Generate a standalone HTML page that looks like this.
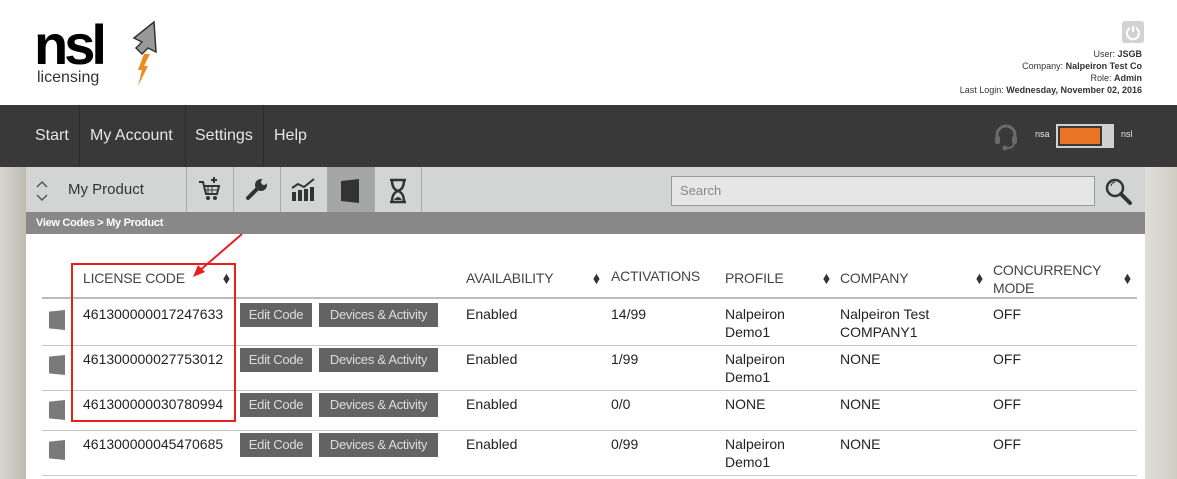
<!DOCTYPE html>
<html><head><meta charset="utf-8"><style>
*{margin:0;padding:0;box-sizing:border-box}
body{width:1177px;height:479px;overflow:hidden;position:relative;background:#fff;font-family:"Liberation Sans",sans-serif}
.a{position:absolute}
.nav{top:105px;left:0;width:1177px;height:62px;background:#393939}
.nav span{position:absolute;top:22px;color:#e6e6e6;font-size:16px}
.sep{position:absolute;top:105px;width:1px;height:62px;background:#2b2b2b}
.side{background:linear-gradient(90deg,#d8d6cc,#bdbcb4)}
.cell{position:absolute;top:167px;height:45px;width:47px;border-left:1px solid #aaa}
.th{position:absolute;font-size:14px;color:#444;letter-spacing:-.2px}
.sort{position:absolute;font-size:9px;color:#333;line-height:5px;transform:scaleX(1.2)}
.td{position:absolute;font-size:14px;color:#222;line-height:18px}
.btn{position:absolute;height:24px;background:#636363;color:#ddd;font-size:13px;line-height:24px;text-align:center;letter-spacing:-.3px}
.ln{position:absolute;left:42px;width:1095px;height:1px;background:#c8c8c8}
.bk{position:absolute;left:49px;width:16px;height:20px;background:#7a7a7a;border-radius:2px 0 0 2px;clip-path:polygon(0 8%,100% 0,100% 100%,0 92%)}
</style></head><body>
<!-- logo -->
<div class="a" style="left:34px;top:17px;font-size:56px;font-weight:bold;letter-spacing:-4px;line-height:56px;color:#000">nsl</div>
<div class="a" style="left:37px;top:69px;font-size:16px;line-height:18px;color:#333">licensing</div>
<svg class="a" style="left:130px;top:20px" width="28" height="68" viewBox="0 0 28 68"><polygon points="24,2 26,32 18,28 12,34 6,28 12,22 4,18" fill="#999" stroke="#333" stroke-width="1.5"/><polygon points="14,34 20,34 14,46 18,46 8,66 12,50 8,50" fill="#f08a1c"/></svg>
<!-- user info -->
<div class="a" style="left:1122px;top:21px;width:22px;height:22px;background:#d2d2d2;border-radius:3px"></div>
<svg class="a" style="left:1124px;top:23px" width="18" height="18"><path d="M6 5a6 6 0 1 0 6 0" fill="none" stroke="#fff" stroke-width="2"/><path d="M9 3v6" stroke="#fff" stroke-width="2"/></svg>
<div class="a" style="right:35px;top:48px;text-align:right;font-size:9px;line-height:12px;color:#333">User: <b>JSGB</b><br>Company: <b>Nalpeiron Test Co</b><br>Role: <b>Admin</b><br>Last Login: <b>Wednesday, November 02, 2016</b></div>
<!-- nav -->
<div class="a nav"><span style="left:35px">Start</span><span style="left:90px">My Account</span><span style="left:195px">Settings</span><span style="left:274px">Help</span>
<svg style="position:absolute;left:993px;top:18px" width="26" height="28"><path d="M4 16v-4a9 9 0 0 1 18 0v4" fill="none" stroke="#6a6a6a" stroke-width="3"/><rect x="2" y="13" width="5" height="8" rx="2" fill="#6a6a6a"/><rect x="19" y="13" width="5" height="8" rx="2" fill="#6a6a6a"/><path d="M21 20q0 5-7 5" fill="none" stroke="#6a6a6a" stroke-width="2"/><circle cx="12" cy="25" r="2.5" fill="#6a6a6a"/></svg>
<span style="left:1035px;top:24px;font-size:9px">nsa</span>
<div style="position:absolute;left:1056px;top:19px;width:48px;height:24px;border:2px solid #d0d0d0;background:#393939;padding:2px"><div style="width:100%;height:100%;background:#ea7425"></div></div>
<div style="position:absolute;left:1104px;top:19px;width:10px;height:24px;background:#d0d0d0"></div>
<span style="left:1121px;top:24px;font-size:9px">nsl</span></div>
<div class="sep" style="left:79px"></div><div class="sep" style="left:185px"></div><div class="sep" style="left:263px"></div>
<!-- sides -->
<div class="a side" style="left:0;top:167px;width:26px;height:312px"></div>
<div class="a side" style="left:1145px;top:167px;width:32px;height:312px;background:linear-gradient(90deg,#e0dfd6,#cfcdc4)"></div>
<!-- toolbar -->
<div class="a" style="left:26px;top:167px;width:1119px;height:45px;background:#d3d5d4"></div>
<svg class="a" style="left:35px;top:180px" width="14" height="22"><path d="M2 7l5-5 5 5M2 15l5 5 5-5" fill="none" stroke="#555" stroke-width="1.5"/></svg>
<div class="a" style="left:68px;top:181px;font-size:15px;color:#333">My Product</div>
<div class="cell" style="left:186px"></div><div class="cell" style="left:233px"></div><div class="cell" style="left:280px"></div><div class="cell" style="left:327px;background:#a5a6a6"></div><div class="cell" style="left:374px"></div><div class="cell" style="left:421px;width:1px"></div>
<svg class="a" style="left:197px;top:176px" width="26" height="26"><path d="M2 6h4l3 12h11l2-8H8" fill="none" stroke="#333" stroke-width="2"/><path d="M11 10v8M15 10v8M8 14h13" stroke="#333"/><circle cx="11" cy="22" r="2" fill="#333"/><circle cx="18" cy="22" r="2" fill="#333"/><path d="M17 1v6M14 4h6" stroke="#333" stroke-width="2"/></svg>
<svg class="a" style="left:245px;top:177px" width="24" height="24"><path d="M3 21l10-10" stroke="#333" stroke-width="4" stroke-linecap="round"/><circle cx="16" cy="8" r="6" fill="#333"/><circle cx="19" cy="5" r="3" fill="#d3d5d4"/></svg>
<svg class="a" style="left:291px;top:178px" width="26" height="24"><rect x="1" y="14" width="4" height="9" fill="#333"/><rect x="7" y="12" width="4" height="11" fill="#333"/><rect x="13" y="11" width="4" height="12" fill="#333"/><rect x="19" y="9" width="4" height="14" fill="#333"/><path d="M1 10l6-4 6 3 10-8" fill="none" stroke="#333" stroke-width="2"/></svg>
<svg class="a" style="left:340px;top:178px" width="20" height="26"><polygon points="1,3 19,1 19,25 1,23" fill="#333"/></svg>
<svg class="a" style="left:388px;top:178px" width="20" height="26"><path d="M2 2h16M2 24h16M4 2q0 9 6 11q6 2 6 11M16 2q0 9-6 11q-6 2-6 11" fill="none" stroke="#333" stroke-width="2.5"/><path d="M6 22q4-6 8 0z" fill="#333"/></svg>
<div class="a" style="left:671px;top:176px;width:424px;height:30px;background:#e6e6e6;border:1px solid #999;font-size:13px;color:#888;padding:6px 8px">Search</div>
<svg class="a" style="left:1104px;top:176px" width="30" height="30"><circle cx="11" cy="12" r="8" fill="none" stroke="#333" stroke-width="2.5"/><path d="M17 18l9 9" stroke="#333" stroke-width="4" stroke-linecap="round"/><path d="M7 10a5 5 0 0 1 4-4" stroke="#333" fill="none"/></svg>
<!-- breadcrumb -->
<div class="a" style="left:26px;top:212px;width:1119px;height:22px;background:#888;color:#fff;font-size:11px;font-weight:bold;padding:5px 10px;letter-spacing:-.3px">View Codes &gt; My Product</div>
<!-- headers -->
<div class="th" style="left:83px;top:270px">LICENSE CODE</div><div class="sort" style="left:222px;top:274px">▲<br>▼</div>
<div class="th" style="left:466px;top:270px">AVAILABILITY</div><div class="sort" style="left:592px;top:274px">▲<br>▼</div>
<div class="th" style="left:611px;top:268px">ACTIVATIONS</div>
<div class="th" style="left:725px;top:270px">PROFILE</div><div class="sort" style="left:822px;top:274px">▲<br>▼</div>
<div class="th" style="left:840px;top:270px">COMPANY</div><div class="sort" style="left:975px;top:274px">▲<br>▼</div>
<div class="th" style="left:993px;top:261px;line-height:18px">CONCURRENCY<br>MODE</div><div class="sort" style="left:1123px;top:274px">▲<br>▼</div>
<div class="ln" style="top:297px;height:2px;background:#bbb"></div>
<div class="ln" style="top:345px"></div><div class="ln" style="top:390px"></div><div class="ln" style="top:430px"></div><div class="ln" style="top:475px"></div>
<!-- rows -->
<div class="bk" style="top:310px"></div><div class="bk" style="top:355px"></div><div class="bk" style="top:400px"></div><div class="bk" style="top:440px"></div>
<div class="td" style="left:83px;top:305px">461300000017247633</div>
<div class="td" style="left:83px;top:350px">461300000027753012</div>
<div class="td" style="left:83px;top:395px">461300000030780994</div>
<div class="td" style="left:83px;top:435px">461300000045470685</div>
<div class="btn" style="left:240px;top:303px;width:72px">Edit Code</div><div class="btn" style="left:319px;top:303px;width:119px">Devices &amp; Activity</div>
<div class="btn" style="left:240px;top:348px;width:72px">Edit Code</div><div class="btn" style="left:319px;top:348px;width:119px">Devices &amp; Activity</div>
<div class="btn" style="left:240px;top:393px;width:72px">Edit Code</div><div class="btn" style="left:319px;top:393px;width:119px">Devices &amp; Activity</div>
<div class="btn" style="left:240px;top:433px;width:72px">Edit Code</div><div class="btn" style="left:319px;top:433px;width:119px">Devices &amp; Activity</div>
<div class="td" style="left:466px;top:305px">Enabled</div><div class="td" style="left:611px;top:305px">14/99</div><div class="td" style="left:725px;top:305px">Nalpeiron<br>Demo1</div><div class="td" style="left:840px;top:305px">Nalpeiron Test<br>COMPANY1</div><div class="td" style="left:993px;top:305px">OFF</div>
<div class="td" style="left:466px;top:350px">Enabled</div><div class="td" style="left:611px;top:350px">1/99</div><div class="td" style="left:725px;top:350px">Nalpeiron<br>Demo1</div><div class="td" style="left:840px;top:350px">NONE</div><div class="td" style="left:993px;top:350px">OFF</div>
<div class="td" style="left:466px;top:395px">Enabled</div><div class="td" style="left:611px;top:395px">0/0</div><div class="td" style="left:725px;top:395px">NONE</div><div class="td" style="left:840px;top:395px">NONE</div><div class="td" style="left:993px;top:395px">OFF</div>
<div class="td" style="left:466px;top:435px">Enabled</div><div class="td" style="left:611px;top:435px">0/99</div><div class="td" style="left:725px;top:435px">Nalpeiron<br>Demo1</div><div class="td" style="left:840px;top:435px">NONE</div><div class="td" style="left:993px;top:435px">OFF</div>
<!-- red annotation -->
<div class="a" style="left:71px;top:263px;width:165px;height:159px;border:2px solid #e8201c"></div>
<svg class="a" style="left:190px;top:232px" width="56" height="48"><path d="M52 2L8 40" stroke="#e8201c" stroke-width="2"/><polygon points="3,45 8,33 15,40" fill="#e8201c"/></svg>
</body></html>
